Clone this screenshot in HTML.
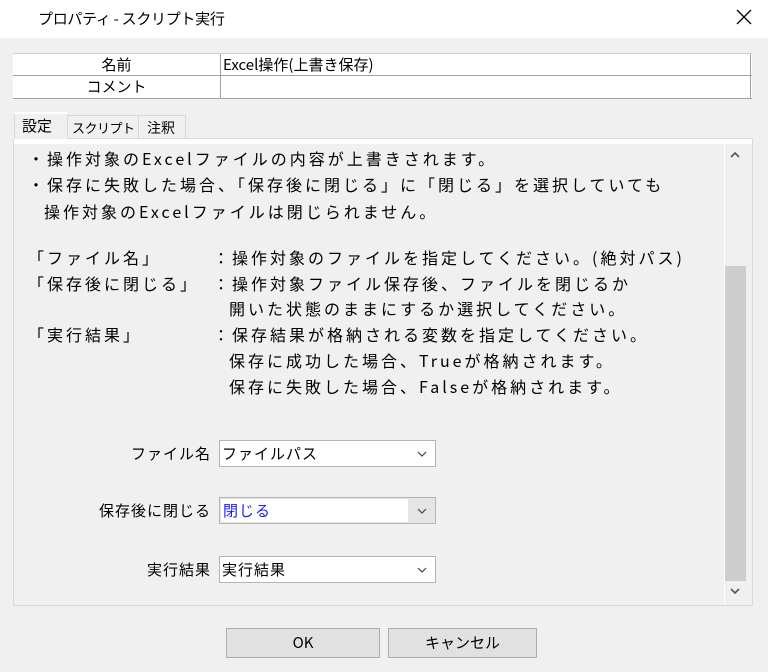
<!DOCTYPE html>
<html><head><meta charset="utf-8"><style>
*{margin:0;padding:0;box-sizing:border-box}
body{width:768px;height:672px;background:#f0f0f0;position:relative;overflow:hidden;font-family:"Liberation Sans","Noto Sans CJK JP",sans-serif;color:#000}
.a{position:absolute;white-space:nowrap}
.title{left:0;top:0;width:768px;height:38px;background:#fff}
.t{font-size:16px;line-height:20px;font-family:"Noto Sans CJK JP",sans-serif;letter-spacing:3px}
.f{font-size:15px;line-height:20px;font-family:"Noto Sans CJK JP",sans-serif;letter-spacing:1px}
.sel{position:absolute;background:#fff;border:1px solid #b5b5b5;height:27px;font-size:15px;line-height:25px;padding-left:2px;font-family:"Noto Sans CJK JP",sans-serif;letter-spacing:1px}
.sel .ar{position:absolute;right:6px;top:0;width:14px;height:25px}
.btn{position:absolute;background:#e1e1e1;border:1px solid #adadad;height:30px;text-align:center;font-size:15px;line-height:28px;font-family:"Noto Sans CJK JP",sans-serif}
</style></head><body>
<div class="a title"></div>
<div class="a" style="left:38px;top:8px;font-size:15px;font-family:'Noto Sans CJK JP',sans-serif;letter-spacing:-0.3px">プロパティ - スクリプト実行</div>
<svg class="a" style="left:735px;top:8px" width="18" height="18"><path d="M2 2L16 16M16 2L2 16" stroke="#000" stroke-width="1.3"/></svg>

<div class="a" style="left:13px;top:53px;width:739px;height:46px;background:#fff;border-bottom:1px solid #a0a0a0"></div>
<div class="a" style="left:13px;top:75px;width:739px;height:1px;background:#a0a0a0"></div>
<div class="a" style="left:220px;top:53px;width:1px;height:45px;background:#a0a0a0"></div>
<div class="a" style="left:750px;top:53px;width:1px;height:45px;background:#a0a0a0"></div>
<div class="a" style="left:13px;top:53px;width:739px;height:1px;background:#d0d0d0"></div>
<div class="a" style="left:13px;top:54px;width:207px;text-align:center;font-size:15px;line-height:21px;font-family:'Noto Sans CJK JP',sans-serif">名前</div>
<div class="a" style="left:13px;top:76px;width:207px;text-align:center;font-size:15px;line-height:21px;font-family:'Noto Sans CJK JP',sans-serif">コメント</div>
<div class="a" style="left:223px;top:54px;font-size:15px;line-height:21px;font-family:'Noto Sans CJK JP',sans-serif">Excel操作(上書き保存)</div>

<div class="a" style="left:67px;top:115px;width:72px;height:24px;background:#f0f0f0;border:1px solid #d9d9d9;border-bottom:none"></div>
<div class="a" style="left:138px;top:115px;width:48px;height:24px;background:#f0f0f0;border:1px solid #d9d9d9;border-bottom:none"></div>
<div class="a" style="left:13px;top:138px;width:740px;height:468px;border:1px solid #d9d9d9;background:#f0f0f0"></div>
<div class="a" style="left:14px;top:112px;width:54px;height:28px;background:#f0f0f0;border:1px solid #d9d9d9;border-bottom:none"></div>
<div class="a" style="left:14px;top:139px;width:738px;height:5px;background:#fff"></div>
<div class="a" style="left:14px;top:112px;width:54px;height:2px;background:#fff"></div>
<div class="a" style="left:22px;top:115px;font-size:15px;font-family:'Noto Sans CJK JP',sans-serif">設定</div>
<div class="a" style="left:72px;top:118px;font-size:13px;letter-spacing:-0.5px;font-family:'Noto Sans CJK JP',sans-serif">スクリプト</div>
<div class="a" style="left:147px;top:118px;font-size:14px;font-family:'Noto Sans CJK JP',sans-serif">注釈</div>

<div class="a" style="left:724px;top:144px;width:1px;height:461px;background:#fff"></div>
<svg class="a" style="left:729px;top:150px" width="12" height="10"><path d="M2 7L6 3L10 7" stroke="#555" stroke-width="1.6" fill="none"/></svg>
<div class="a" style="left:725px;top:266px;width:21px;height:315px;background:#cdcdcd"></div>
<svg class="a" style="left:729px;top:586px" width="12" height="10"><path d="M2 3L6 7L10 3" stroke="#555" stroke-width="1.6" fill="none"/></svg>

<div class="a t" style="left:28px;top:148px">・操作対象のExcelファイルの内容が上書きされます。</div>
<div class="a t" style="left:28px;top:174px">・保存に失敗した場合、「保存後に閉じる」に「閉じる」を選択していても</div>
<div class="a t" style="left:44px;top:201px">操作対象のExcelファイルは閉じられません。</div>
<div class="a t" style="left:28px;top:247px">「ファイル名」</div>
<div class="a t" style="left:28px;top:273px">「保存後に閉じる」</div>
<div class="a t" style="left:28px;top:324px">「実行結果」</div>
<div class="a t" style="left:213px;top:247px">：操作対象のファイルを指定してください。(絶対パス)</div>
<div class="a t" style="left:213px;top:273px">：操作対象ファイル保存後、ファイルを閉じるか</div>
<div class="a t" style="left:229px;top:298px">開いた状態のままにするか選択してください。</div>
<div class="a t" style="left:213px;top:324px">：保存結果が格納される変数を指定してください。</div>
<div class="a t" style="left:229px;top:350px">保存に成功した場合、Trueが格納されます。</div>
<div class="a t" style="left:229px;top:376px">保存に失敗した場合、Falseが格納されます。</div>

<div class="a f" style="left:0;width:211px;text-align:right;top:444px">ファイル名</div>
<div class="a f" style="left:0;width:211px;text-align:right;top:501px">保存後に閉じる</div>
<div class="a f" style="left:0;width:211px;text-align:right;top:560px">実行結果</div>
<div class="sel" style="left:219px;top:440px;width:217px">ファイルパス<svg class="ar" viewBox="0 0 14 25"><path d="M3 11L7 15L11 11" stroke="#444" stroke-width="1.2" fill="none"/></svg></div>
<div class="sel" style="left:219px;top:497px;width:217px;background:#e5e5e5;padding:0"><div style="position:absolute;left:1px;top:1px;width:187px;height:23px;background:#fff"></div><span style="position:relative;left:3px;color:#1a1aff">閉じる</span><svg class="ar" viewBox="0 0 14 25"><path d="M3 11L7 15L11 11" stroke="#444" stroke-width="1.2" fill="none"/></svg></div>
<div class="sel" style="left:219px;top:556px;width:217px">実行結果<svg class="ar" viewBox="0 0 14 25"><path d="M3 11L7 15L11 11" stroke="#444" stroke-width="1.2" fill="none"/></svg></div>

<div class="btn" style="left:226px;top:628px;width:154px">OK</div>
<div class="btn" style="left:388px;top:628px;width:149px">キャンセル</div>
</body></html>
